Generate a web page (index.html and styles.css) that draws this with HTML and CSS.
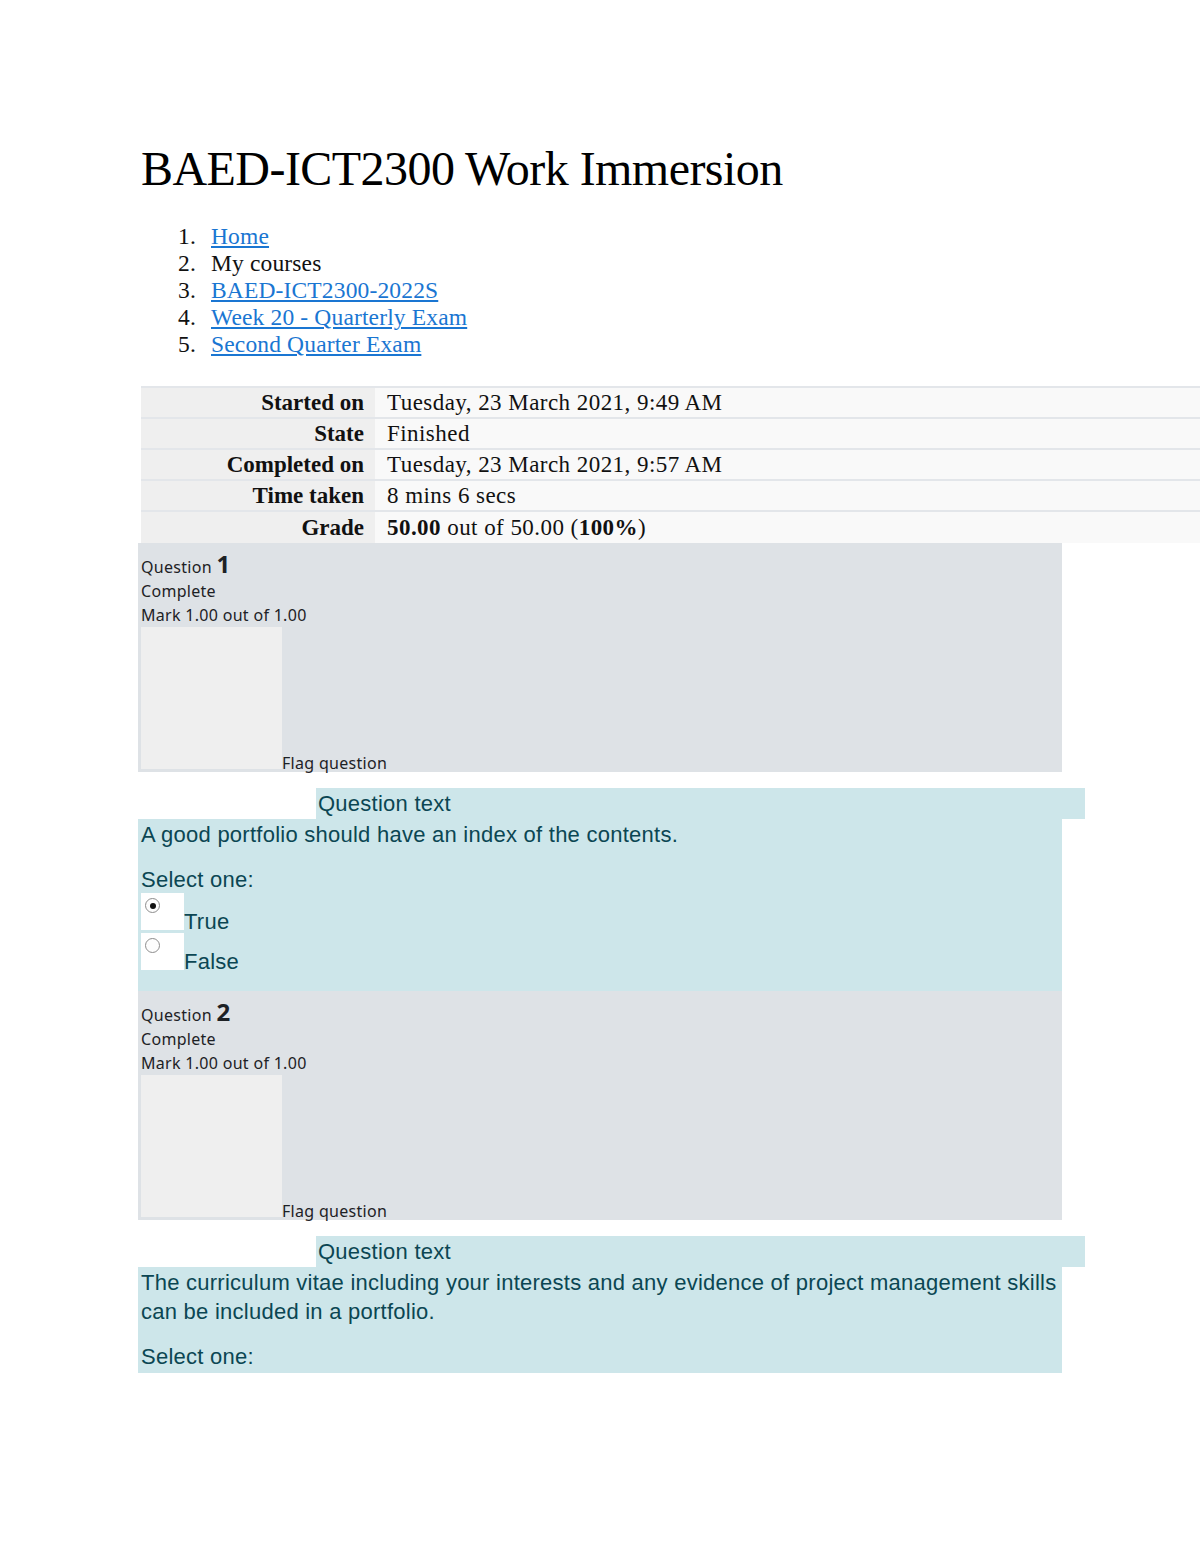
FILE: index.html
```html
<!DOCTYPE html>
<html lang="en">
<head>
<meta charset="utf-8">
<title>BAED-ICT2300 Work Immersion</title>
<link rel="stylesheet" href="styles.css">
</head>
<body>
<div class="page">
  <h1 class="title">BAED-ICT2300 Work Immersion</h1>
  <ol class="crumbs">
    <li><a href="#">Home</a></li>
    <li>My courses</li>
    <li><a href="#">BAED-ICT2300-2022S</a></li>
    <li><a href="#">Week 20 - Quarterly Exam</a></li>
    <li><a href="#">Second Quarter Exam</a></li>
  </ol>

  <table class="summary">
    <tbody>
      <tr><th>Started on</th><td>Tuesday, 23 March 2021, 9:49 AM</td></tr>
      <tr><th>State</th><td>Finished</td></tr>
      <tr><th>Completed on</th><td>Tuesday, 23 March 2021, 9:57 AM</td></tr>
      <tr><th>Time taken</th><td>8 mins 6 secs</td></tr>
      <tr><th>Grade</th><td><b>50.00</b> out of 50.00 (<b>100%</b>)</td></tr>
    </tbody>
  </table>

  <div class="q-info">
    <div class="q-no">Question <span class="num">1</span></div>
    <div class="q-state">Complete</div>
    <div class="q-grade">Mark 1.00 out of 1.00</div>
    <div class="q-flag"><span class="flag-box"></span>Flag question</div>
  </div>
  <div class="q-legend">Question text</div>
  <div class="q-body">
    <p class="q-text">A good portfolio should have an index of the contents.</p>
    <p class="q-prompt">Select one:</p>
    <div class="answers">
      <div class="opt"><span class="radio-box"><span class="radio checked"></span></span><span class="opt-label">True</span></div>
      <div class="opt"><span class="radio-box"><span class="radio"></span></span><span class="opt-label">False</span></div>
    </div>
  </div>

  <div class="q-info">
    <div class="q-no">Question <span class="num">2</span></div>
    <div class="q-state">Complete</div>
    <div class="q-grade">Mark 1.00 out of 1.00</div>
    <div class="q-flag"><span class="flag-box"></span>Flag question</div>
  </div>
  <div class="q-legend">Question text</div>
  <div class="q-body">
    <p class="q-text">The curriculum vitae including your interests and any evidence of project management skills can be included in a portfolio.</p>
    <p class="q-prompt">Select one:</p>
  </div>
</div>
</body>
</html>
```

FILE: styles.css
```css
html, body {
  margin: 0;
  padding: 0;
  background: #ffffff;
  overflow-x: hidden;
}

.page {
  padding: 141px 0 160px 138px;
}

.title {
  margin: 0;
  padding-left: 3px;
  font-family: "Liberation Serif", "Times New Roman", serif;
  font-weight: normal;
  font-size: 48px;
  line-height: 56px;
  letter-spacing: -0.55px;
  color: #000;
}

.crumbs {
  list-style: none;
  counter-reset: crumb;
  margin: 26px 0 0 40px;
  padding: 0;
  font-family: "Liberation Serif", "Times New Roman", serif;
  font-size: 23.5px;
  letter-spacing: 0.15px;
  line-height: 27px;
  color: #111;
}

.crumbs li {
  counter-increment: crumb;
}

.crumbs li::before {
  content: counter(crumb) ".";
  display: inline-block;
  width: 33px;
}

.crumbs a {
  color: #1a76d2;
  text-decoration: underline;
  text-decoration-thickness: 2px;
  text-underline-offset: 2px;
}

.summary {
  margin: 28px 0 0 3px;
  width: calc(100% - 3px);
  border-collapse: collapse;
  font-family: "Liberation Serif", "Times New Roman", serif;
  font-size: 23px;
  color: #111;
}

.summary tr {
  border-top: 2px solid #e3e6ea;
}

.summary th,
.summary td {
  height: 29px;
  padding: 0;
  line-height: 29px;
  vertical-align: middle;
}

.summary tr:last-child th,
.summary tr:last-child td {
  height: 31px;
}

.summary th {
  width: 223px;
  padding-right: 11px;
  text-align: right;
  background: #efefef;
  font-weight: bold;
}

.summary td {
  padding-left: 12px;
  background: #f9f9f9;
  text-align: left;
  letter-spacing: 0.45px;
}

.q-info {
  width: 924px;
  box-sizing: border-box;
  padding: 9px 0 0 3px;
  background: #dee2e6;
  font-family: "Noto Sans", "Open Sans", sans-serif;
  font-size: 16px;
  line-height: 24px;
  letter-spacing: 0.3px;
  color: #1d2125;
}

.q-no {
  line-height: 24px;
}

.q-no .num {
  font-size: 24px;
  font-weight: bold;
  letter-spacing: 0;
}

.q-flag {
  line-height: 18px;
}

.flag-box {
  display: inline-block;
  width: 141px;
  height: 142px;
  background: #efefef;
}

.q-legend {
  margin: 16px 0 0 178px;
  width: 769px;
  box-sizing: border-box;
  height: 31px;
  padding-left: 2px;
  background: #cde6ea;
  font-family: "Liberation Sans", Arial, sans-serif;
  font-size: 22px;
  line-height: 31px;
  letter-spacing: 0.25px;
  color: #0b4653;
}

.q-body {
  width: 924px;
  box-sizing: border-box;
  padding: 1px 0 3px 3px;
  background: #cde6ea;
  font-family: "Liberation Sans", Arial, sans-serif;
  font-size: 22px;
  letter-spacing: 0.25px;
  color: #0b4653;
}

.q-text {
  margin: 0;
  line-height: 29px;
}

.q-prompt {
  margin: 18px 0 0;
  line-height: 26px;
}

.answers {
  padding-bottom: 15px;
}

.opt {
  display: flex;
  align-items: flex-end;
  margin-bottom: 3px;
}

.radio-box {
  display: block;
  width: 43px;
  height: 37px;
  background: #ffffff;
  position: relative;
}

.radio {
  position: absolute;
  left: 4px;
  top: 5px;
  width: 13px;
  height: 13px;
  border: 1px solid #8d8d8d;
  border-radius: 50%;
  background: #fdfdfd;
}

.radio.checked::after {
  content: "";
  position: absolute;
  left: 3.5px;
  top: 3.5px;
  width: 6px;
  height: 6px;
  border-radius: 50%;
  background: #111;
}

.opt-label {
  line-height: 22px;
  margin-bottom: -3px;
}
```
